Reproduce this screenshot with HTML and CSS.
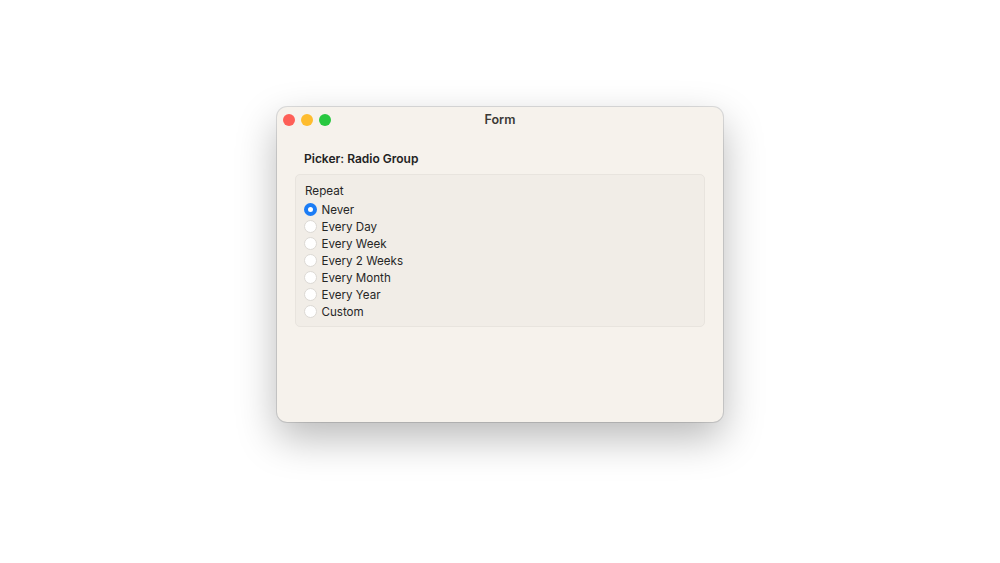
FILE: index.html
```html
<!DOCTYPE html>
<html>
<head>
<meta charset="utf-8">
<link rel="stylesheet" href="styles.css">
</head>
<body>
<div class="stage">
  <div class="window">
    <div class="titlebar">
      <div class="lights">
        <span class="light red"></span>
        <span class="light yellow"></span>
        <span class="light green"></span>
      </div>
      <div class="title">Form</div>
    </div>
    <div class="content">
      <div class="heading">Picker: Radio Group</div>
      <div class="group">
        <div class="label">Repeat</div>
        <div class="options">
          <div class="opt"><span class="radio on"></span><span>Never</span></div>
          <div class="opt"><span class="radio"></span><span>Every Day</span></div>
          <div class="opt"><span class="radio"></span><span>Every Week</span></div>
          <div class="opt"><span class="radio"></span><span>Every 2 Weeks</span></div>
          <div class="opt"><span class="radio"></span><span>Every Month</span></div>
          <div class="opt"><span class="radio"></span><span>Every Year</span></div>
          <div class="opt"><span class="radio"></span><span>Custom</span></div>
        </div>
      </div>
    </div>
  </div>
</div>
</body>
</html>
```

FILE: styles.css
```css
html, body {
  margin: 0;
  padding: 0;
  background: #ffffff;
  font-family: Inter, "Noto Sans", "Liberation Sans", sans-serif;
  color: #262626;
}
.stage {
  width: 1000px;
  height: 563px;
  display: flex;
  justify-content: center;
  padding-top: 107px;
  box-sizing: border-box;
}
.window {
  width: 446px;
  height: 315px;
  background: #f6f2ec;
  border-radius: 10px;
  box-shadow: 0 0 0 1px rgba(0,0,0,0.12), 0 16px 40px rgba(0,0,0,0.28);
  display: flex;
  flex-direction: column;
}
.titlebar {
  height: 26px;
  display: flex;
  align-items: center;
  position: relative;
  padding-left: 6px;
}
.lights {
  display: flex;
  gap: 6px;
}
.light {
  width: 12px;
  height: 12px;
  border-radius: 50%;
  display: block;
}
.red { background: #fe5f57; }
.yellow { background: #febc2e; }
.green { background: #28c840; }
.title {
  position: absolute;
  left: 0;
  right: 0;
  top: 0;
  height: 26px;
  line-height: 26px;
  text-align: center;
  font-weight: 600;
  font-size: 12.5px;
  color: #3b3936;
  pointer-events: none;
}
.content {
  padding: 18px 18px 0 18px;
}
.heading {
  font-weight: 600;
  font-size: 12px;
  padding-left: 9px;
  height: 16px;
  line-height: 16px;
  color: #232323;
}
.group {
  margin-top: 7px;
  background: #f1ede7;
  border: 1px solid #e8e4de;
  border-radius: 5px;
  padding: 7px 8px 6px 8px;
  height: 153px;
  box-sizing: border-box;
}
.label {
  font-size: 11.7px;
  height: 19px;
  line-height: 19px;
  padding-left: 1px;
  color: #262626;
}
.options {
  display: flex;
  flex-direction: column;
}
.opt {
  display: flex;
  align-items: center;
  height: 17px;
  font-size: 11.6px;
  gap: 4.5px;
}
.radio {
  width: 13px;
  height: 13px;
  box-sizing: border-box;
  border-radius: 50%;
  background: #ffffff;
  border: 1px solid #dcd9d4;
  display: block;
  flex: none;
}
.radio.on {
  background: #ffffff;
  border: 4px solid #1b7cf5;
}
```
